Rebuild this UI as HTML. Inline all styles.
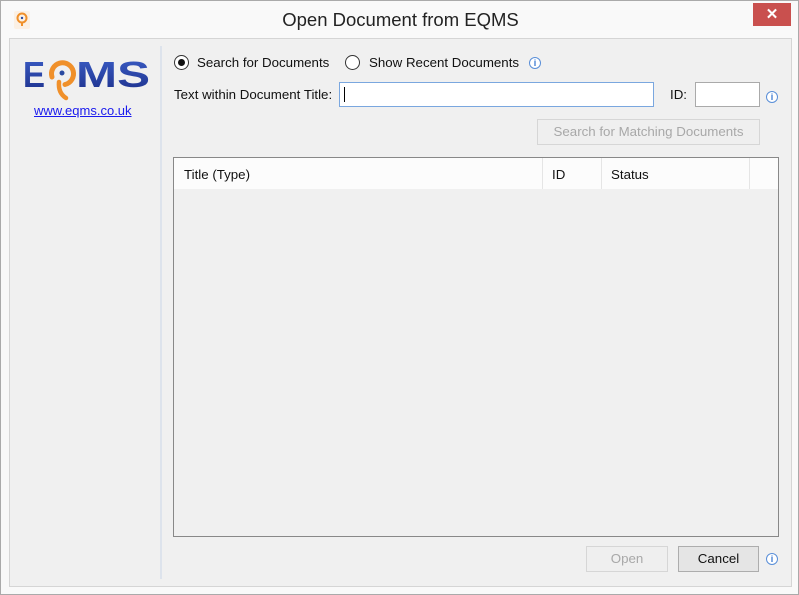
<!DOCTYPE html>
<html><head><meta charset="utf-8"><style>
*{margin:0;padding:0;box-sizing:border-box}
body{width:799px;height:595px;background:#fff;font-family:"Liberation Sans",sans-serif;font-size:13.3px;color:#111;position:relative;overflow:hidden}
.win{position:absolute;left:0;top:0;width:799px;height:595px;border:1px solid #aaa;background:#f9f9f9}
.abs{position:absolute}
.title{left:0;top:8px;width:799px;text-align:center;font-size:18.5px;color:#222}
.close{left:752px;top:2px;width:38px;height:23px;background:#c9504e;color:#fff;text-align:center;font-size:15px;line-height:23px;font-weight:bold}
.panel{left:8px;top:37px;width:783px;height:549px;background:#f0f0f0;border:1px solid #d5d5d5}
.sep{left:159px;top:45px;width:2px;height:533px;background:#dde3ec}
.radio{width:15px;height:15px;border:1px solid #333;border-radius:50%;background:#fff}
.radio.on::after{content:"";position:absolute;left:3px;top:3px;width:7px;height:7px;border-radius:50%;background:#111}
.info{width:12px;height:12px;border:1px solid #5a8fd8;border-radius:50%;color:#3b78d0;font-size:9px;line-height:10px;text-align:center;font-weight:bold;background:#fff}
.input{background:#fff;border:1px solid #aaa}
.btn{border:1px solid #d6d6d6;background:#efefef;color:#a8a8a8;text-align:center;font-size:13.3px}
</style></head><body>
<div class="win">
<div class="abs" style="left:13px;top:10px;width:16px;height:18px;background:#fbf0e4;border-radius:2px"></div>
<svg class="abs" style="left:13px;top:10px" width="16" height="18"><circle cx="8" cy="7" r="4.5" fill="none" stroke="#f0902a" stroke-width="2"/><circle cx="8" cy="7" r="1.2" fill="#2a4aa0"/><path d="M8 11.5 L8 15" stroke="#f0902a" stroke-width="2"/></svg>
<div class="abs title">Open Document from EQMS</div>
<div class="abs close">✕</div>
<div class="abs panel"></div>
<div class="abs sep"></div>
<svg class="abs" style="left:20px;top:48px" width="135" height="55">
<defs><linearGradient id="g" x1="0" y1="0" x2="0" y2="1"><stop offset="0" stop-color="#3c5fc8"/><stop offset="1" stop-color="#1c2f8a"/></linearGradient></defs>
<text x="2" y="38" font-family="Liberation Sans" font-weight="bold" font-size="36" fill="url(#g)" textLength="22" lengthAdjust="spacingAndGlyphs">E</text>
<path d="M31 28 A11 11 0 1 1 44 35.5" fill="none" stroke="#f0902a" stroke-width="5" stroke-linecap="round"/>
<path d="M38 33 Q37 44 45 49" fill="none" stroke="#f0902a" stroke-width="4.5" stroke-linecap="round"/>
<circle cx="41" cy="24" r="2.5" fill="#2a4aa0"/>
<text x="55" y="38" font-family="Liberation Sans" font-weight="bold" font-size="36" fill="url(#g)" textLength="74" lengthAdjust="spacingAndGlyphs">MS</text>
</svg>
<div class="abs" style="left:33px;top:102px;font-size:13px;color:#1a1aee;text-decoration:underline">www.eqms.co.uk</div>

<div class="abs radio on" style="left:173px;top:54px"></div>
<div class="abs" style="left:196px;top:54px">Search for Documents</div>
<div class="abs radio" style="left:344px;top:54px"></div>
<div class="abs" style="left:368px;top:54px">Show Recent Documents</div>
<div class="abs info" style="left:528px;top:56px">i</div>
<div class="abs" style="left:173px;top:86px">Text within Document Title:</div>
<div class="abs input" style="left:338px;top:81px;width:315px;height:25px;border-color:#7aa7df"><div style="position:absolute;left:4px;top:4px;width:1px;height:15px;background:#000"></div></div>
<div class="abs" style="left:669px;top:86px">ID:</div>
<div class="abs input" style="left:694px;top:81px;width:65px;height:25px"></div>
<div class="abs info" style="left:765px;top:90px">i</div>
<div class="abs btn" style="left:536px;top:118px;width:223px;height:26px;line-height:24px">Search for Matching Documents</div>

<div class="abs" style="left:172px;top:156px;width:606px;height:380px;border:1px solid #888;background:#f0f0f0">
<div style="position:absolute;left:0;top:0;width:604px;height:31px;background:#fcfcfc"></div>
<div style="position:absolute;left:368px;top:0;width:1px;height:31px;background:#e5e5e5"></div>
<div style="position:absolute;left:427px;top:0;width:1px;height:31px;background:#e5e5e5"></div>
<div style="position:absolute;left:575px;top:0;width:1px;height:31px;background:#e5e5e5"></div>
<div style="position:absolute;left:10px;top:9px">Title (Type)</div>
<div style="position:absolute;left:378px;top:9px">ID</div>
<div style="position:absolute;left:437px;top:9px">Status</div>
</div>

<div class="abs btn" style="left:585px;top:545px;width:82px;height:26px;line-height:24px">Open</div>
<div class="abs btn" style="left:677px;top:545px;width:81px;height:26px;line-height:24px;color:#111;border-color:#adadad;background:#e5e5e5">Cancel</div>
<div class="abs info" style="left:765px;top:552px">i</div>
</div>
</body></html>
